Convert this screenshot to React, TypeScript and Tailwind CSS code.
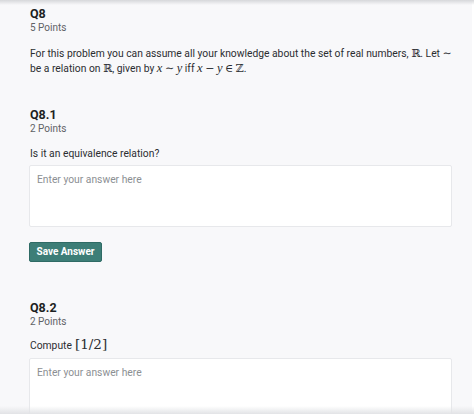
import React from 'react';

const SANS = "font-['Roboto','Open_Sans',sans-serif]";
const MATH = "font-['DejaVu_Serif','Liberation_Serif',serif]";

function M({children, italic}: {children: React.ReactNode; italic?: boolean}) {
  return (
    <span className={`${italic ? "font-['Liberation_Serif',serif] text-[12.5px] italic" : `${MATH} text-[11px]`} leading-none`}>
      {children}
    </span>
  );
}

function QuestionHead({title, points, className = ''}: {title: string; points: string; className?: string}) {
  return (
    <div className={`flex flex-col ${className}`}>
      <h2 className="text-[12.5px] font-bold leading-[15px] text-[#1d1f22]">{title}</h2>
      <p className="text-[10px] leading-[13px] text-[#5f6266]">{points}</p>
    </div>
  );
}

function AnswerBox({height}: {height: string}) {
  return (
    <textarea
      placeholder="Enter your answer here"
      className={`${height} block w-full resize-none rounded-[2px] border border-[#e7e8eb] bg-white px-[7px] py-[7px] text-[10.3px] leading-[13px] text-[#333] outline-none placeholder:text-[#8c8f93]`}
    />
  );
}

export default function App() {
  return (
    <div className={`${SANS} relative flex h-[414px] w-[474px] overflow-hidden bg-white text-[#2b2d31]`}>
      <div className="pointer-events-none absolute inset-x-0 top-0 h-[5px] bg-gradient-to-b from-[#d6d7da] to-transparent" />
      <div className="pointer-events-none absolute inset-x-0 bottom-0 h-[8px] bg-gradient-to-t from-[#e2e3e6] to-transparent" />

      <main className="flex flex-1 flex-col bg-[#f8f8fa] pl-[30px] pr-[20px] pt-[6px]">
        <QuestionHead title="Q8" points="5 Points" />
        <p className="mt-[11.5px] text-[10.3px] leading-[15.5px]">
          For this problem you can assume all your knowledge about the set of real numbers,{' '}
          <M>ℝ</M>. Let <M>∼</M> be a relation on <M>ℝ</M>, given by <M italic>x</M> <M>∼</M>{' '}
          <M italic>y</M> iff <M italic>x</M> <M>−</M> <M italic>y</M> <M>∈</M> <M>ℤ</M>.
        </p>

        <QuestionHead title="Q8.1" points="2 Points" className="mt-[30.5px]" />
        <p className="mt-[10.5px] text-[10.3px] leading-[15.5px]">Is it an equivalence relation?</p>
        <div className="-ml-px mt-[4px]">
          <AnswerBox height="h-[62px]" />
        </div>
        <div className="-ml-px mt-[15px] flex">
          <button className="h-[20px] w-[73px] rounded-[2px] border border-[#2f6b65] bg-[#3d7e77] text-[10px] font-bold leading-none text-white">
            Save Answer
          </button>
        </div>

        <QuestionHead title="Q8.2" points="2 Points" className="mt-[38px]" />
        <p className="mt-[8.5px] flex items-baseline gap-[3px] text-[10.3px] leading-[15.5px]">
          Compute <span className={`${MATH} text-[13.5px] leading-[15.5px]`}>[1/2]</span>
        </p>
        <div className="-ml-px mt-[5px]">
          <AnswerBox height="h-[80px]" />
        </div>
      </main>
      <div className="w-[2px] bg-white" />
    </div>
  );
}
